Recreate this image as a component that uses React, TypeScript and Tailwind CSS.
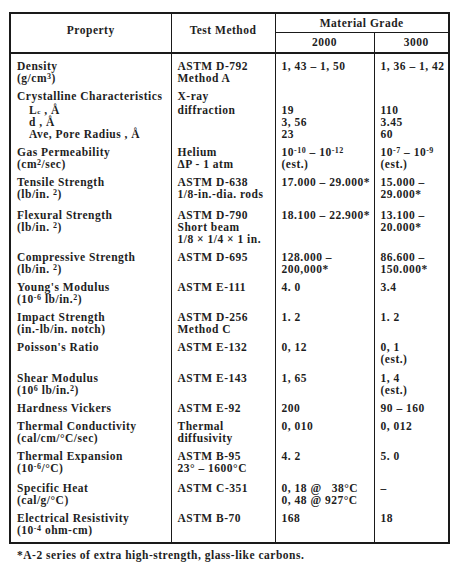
import React from "react";

type Line = React.ReactNode;
type Row = { h: number; gap?: boolean; cells: Line[][] };

const Sup = ({ children }: { children: React.ReactNode }) => (
  <sup className="text-[8px] top-[-3px]">{children}</sup>
);

const ind = (n: React.ReactNode) => <span className="pl-[12px]">{n}</span>;

const rows: Row[] = [
  {
    h: 30,
    cells: [
      ["Density", <>(g/cm<Sup>3</Sup>)</>],
      ["ASTM D-792", "Method A"],
      ["1, 43 – 1, 50"],
      ["1, 36 – 1, 42"],
    ],
  },
  {
    h: 56,
    gap: true,
    cells: [
      [
        "Crystalline Characteristics",
        ind(<>L<sub className="text-[7px] bottom-0">c</sub> , Å</>),
        ind("d , Å"),
        ind("Ave, Pore Radius , Å"),
      ],
      ["X-ray", "diffraction"],
      ["", "19", "3, 56", "23"],
      ["", "110", "3.45", "60"],
    ],
  },
  {
    h: 29,
    cells: [
      ["Gas Permeability", <>(cm<Sup>2</Sup>/sec)</>],
      ["Helium", "ΔP - 1 atm"],
      [<>10<Sup>-10</Sup> – 10<Sup>-12</Sup></>, "(est.)"],
      [<>10<Sup>-7</Sup> – 10<Sup>-9</Sup></>, "(est.)"],
    ],
  },
  {
    h: 33,
    cells: [
      ["Tensile Strength", <>(lb/in. <Sup>2</Sup>)</>],
      ["ASTM D-638", "1/8-in.-dia. rods"],
      ["17.000 – 29.000*"],
      ["15.000 –", "29.000*"],
    ],
  },
  {
    h: 42,
    cells: [
      ["Flexural Strength", <>(lb/in. <Sup>2</Sup>)</>],
      ["ASTM D-790", "Short beam", "1/8 × 1/4 × 1 in."],
      ["18.100 – 22.900*"],
      ["13.100 –", "20.000*"],
    ],
  },
  {
    h: 30,
    cells: [
      ["Compressive Strength", <>(lb/in. <Sup>2</Sup>)</>],
      ["ASTM D-695"],
      ["128.000 –", "200,000*"],
      ["86.600 –", "150.000*"],
    ],
  },
  {
    h: 30,
    cells: [
      ["Young's Modulus", <>(10<Sup>-6</Sup> lb/in.<Sup>2</Sup>)</>],
      ["ASTM E-111"],
      ["4. 0"],
      ["3.4"],
    ],
  },
  {
    h: 30,
    cells: [
      ["Impact Strength", "(in.-lb/in. notch)"],
      ["ASTM D-256", "Method C"],
      ["1. 2"],
      ["1. 2"],
    ],
  },
  {
    h: 31,
    cells: [["Poisson's Ratio"], ["ASTM E-132"], ["0, 12"], ["0, 1", "(est.)"]],
  },
  {
    h: 30,
    cells: [
      ["Shear Modulus", <>(10<Sup>6</Sup> lb/in.<Sup>2</Sup>)</>],
      ["ASTM E-143"],
      ["1, 65"],
      ["1, 4", "(est.)"],
    ],
  },
  {
    h: 18,
    cells: [["Hardness Vickers"], ["ASTM E-92"], ["200"], ["90 – 160"]],
  },
  {
    h: 30,
    cells: [
      ["Thermal Conductivity", "(cal/cm/°C/sec)"],
      ["Thermal", "diffusivity"],
      ["0, 010"],
      ["0, 012"],
    ],
  },
  {
    h: 32,
    cells: [
      ["Thermal Expansion", <>(10<Sup>-6</Sup>/°C)</>],
      ["ASTM B-95", "23° – 1600°C"],
      ["4. 2"],
      ["5. 0"],
    ],
  },
  {
    h: 30,
    cells: [
      ["Specific Heat", "(cal/g/°C)"],
      ["ASTM C-351"],
      ["0, 18 @   38°C", "0, 48 @ 927°C"],
      ["–"],
    ],
  },
  {
    h: 37,
    cells: [
      ["Electrical Resistivity", <>(10<Sup>-4</Sup> ohm-cm)</>],
      ["ASTM B-70"],
      ["168"],
      ["18"],
    ],
  },
];

export default function App() {
  return (
    <div
      className="w-[474px] h-[564px] bg-white pt-[12px] pl-[9px] text-[#1e1e1e] text-[11.5px] font-bold tracking-[0.5px]"
      style={{ fontFamily: '"Liberation Serif", "Times New Roman", serif' }}
    >
      <table className="w-[439px] table-fixed border-collapse border-2 border-[#1a1a1a] leading-[12px]">
        <colgroup>
          <col className="w-[161px]" />
          <col className="w-[104px]" />
          <col className="w-[99px]" />
          <col className="w-[75px]" />
        </colgroup>
        <thead>
          <tr className="h-[19px]">
            <th rowSpan={2} className="align-top pt-[10px] font-bold border-b-2 border-r-[1.5px] border-[#1a1a1a]">
              Property
            </th>
            <th rowSpan={2} className="align-top pt-[10px] font-bold border-b-2 border-r-[1.5px] border-[#1a1a1a]">
              Test Method
            </th>
            <th colSpan={2} className="font-bold border-b-[1.5px] border-[#1a1a1a] pt-[1px]">
              Material Grade
            </th>
          </tr>
          <tr className="h-[21px]">
            <th className="font-bold border-b-2 border-r-[1.5px] border-[#1a1a1a]">2000</th>
            <th className="font-bold border-b-2 border-[#1a1a1a] pl-[10px]">3000</th>
          </tr>
        </thead>
        <tbody>
          {rows.map((r, i) => (
            <tr key={i} style={{ height: r.h }}>
              {r.cells.map((lines, j) => (
                <td
                  key={j}
                  className={
                    "align-top pt-[6px] pl-[6px] p-0 " +
                    (j < 3 ? "border-r-[1.5px] border-[#1a1a1a]" : "")
                  }
                >
                  {lines.map((l, k) => (
                    <div
                      key={k}
                      className={"h-[12px] whitespace-pre " + (r.gap && k === 1 ? "mt-[2px]" : "")}
                    >
                      {l}
                    </div>
                  ))}
                </td>
              ))}
            </tr>
          ))}
        </tbody>
      </table>
      <div className="pl-[8px] mt-[5px] leading-[12px]">
        *A-2 series of extra high-strength, glass-like carbons.
      </div>
    </div>
  );
}
